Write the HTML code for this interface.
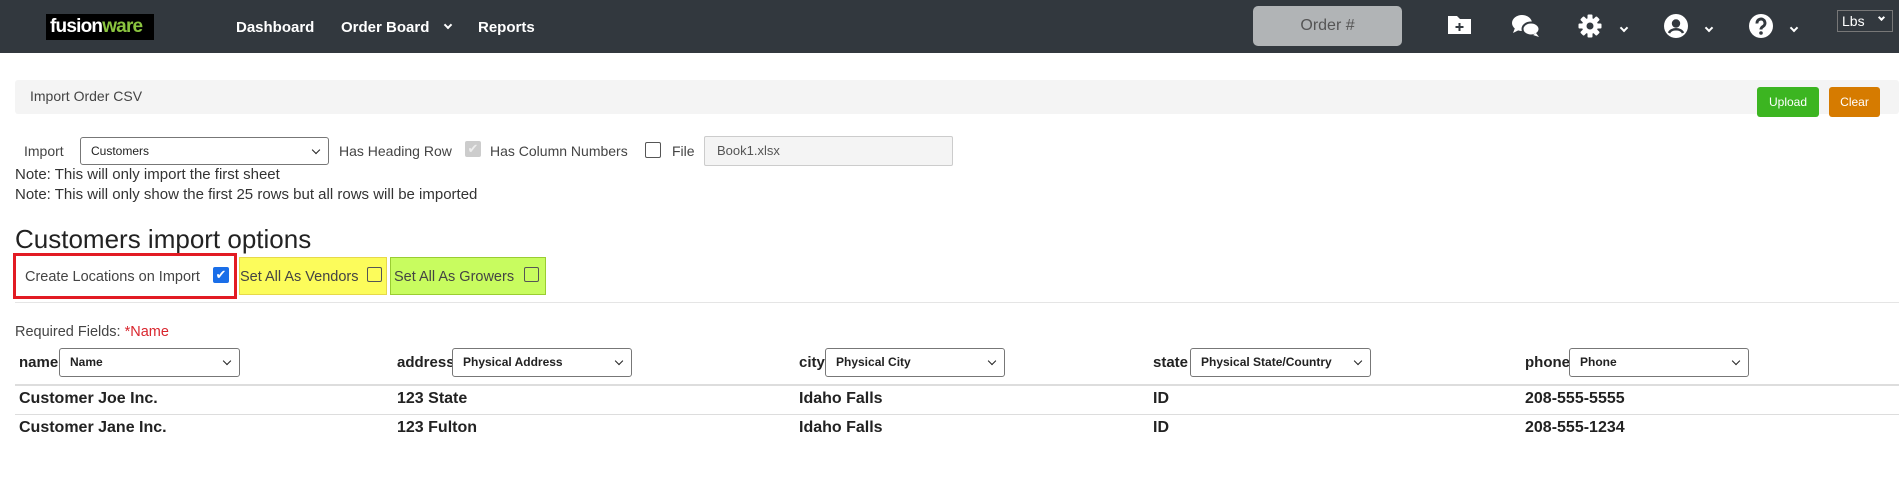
<!DOCTYPE html>
<html><head><meta charset="utf-8"><style>
*{box-sizing:border-box;margin:0;padding:0}
body{width:1899px;height:494px;background:#fff;font-family:"Liberation Sans",sans-serif;color:#333;position:relative;overflow:hidden;font-size:14px}
.a{position:absolute;white-space:nowrap}
.nav{position:absolute;left:0;top:0;width:1899px;height:53px;background:#32383e}
.nl{color:#fff;font-weight:bold;font-size:15px;top:19px}
.sel{position:absolute;border:1px solid #777;border-radius:3px;background:#fff;font-size:12px;font-weight:bold;color:#222;padding-left:10px;line-height:26px}
.sel:after{content:"";position:absolute;right:9px;top:9px;width:5px;height:5px;border-right:1.6px solid #222;border-bottom:1.6px solid #222;transform:rotate(45deg)}
.cb{position:absolute;width:15px;height:15px;border:1.5px solid #555;border-radius:2px;background:transparent}
.chev{position:absolute;width:6px;height:6px;border-right:2px solid #fff;border-bottom:2px solid #fff;transform:rotate(45deg)}
.b{font-weight:bold;font-size:16px;color:#222}
.n{font-size:15px}
.m{font-size:14.5px}
</style></head><body>
<div class="nav"></div>
<div class="a" style="left:46px;top:14px;width:108px;height:26px;background:#000;color:#fff;font-weight:bold;font-size:19px;line-height:26px;padding-left:4px;letter-spacing:-0.8px">fusion<span style="color:#8ac43f">ware</span></div>
<div class="a nl" style="left:236px">Dashboard</div>
<div class="a nl" style="left:341px">Order Board</div>
<div class="chev" style="left:445px;top:22px"></div>
<div class="a nl" style="left:478px">Reports</div>
<div class="a" style="left:1253px;top:6px;width:149px;height:40px;background:#b1b4b6;border-radius:5px;color:#555;font-size:16px;text-align:center;line-height:40px">Order #</div>
<svg class="a" style="left:1447px;top:14px" width="26" height="22" viewBox="0 0 26 22"><path d="M1 2h9l3 3h11v15H1z" fill="#fff"/><path d="M12.5 9v8M8.5 13h8" stroke="#32383e" stroke-width="2"/></svg>
<svg class="a" style="left:1511px;top:13px" width="30" height="26" viewBox="0 0 30 26"><ellipse cx="11" cy="10" rx="10" ry="8" fill="#fff"/><path d="M4 15l-2 5 6-3z" fill="#fff"/><ellipse cx="20" cy="16" rx="8.5" ry="6.5" fill="#fff" stroke="#32383e" stroke-width="2"/><path d="M25 20l3 4-6-2z" fill="#fff"/></svg>
<svg class="a" style="left:1578px;top:14px" width="24" height="24" viewBox="0 0 24 24"><g fill="#fff"><circle cx="12" cy="12" r="8"/><rect x="9.5" y="0.5" width="5" height="5" rx="1"/><rect x="9.5" y="18.5" width="5" height="5" rx="1"/><rect x="0.5" y="9.5" width="5" height="5" rx="1"/><rect x="18.5" y="9.5" width="5" height="5" rx="1"/><rect x="9.5" y="0.5" width="5" height="5" rx="1" transform="rotate(45 12 12)"/><rect x="9.5" y="18.5" width="5" height="5" rx="1" transform="rotate(45 12 12)"/><rect x="0.5" y="9.5" width="5" height="5" rx="1" transform="rotate(45 12 12)"/><rect x="18.5" y="9.5" width="5" height="5" rx="1" transform="rotate(45 12 12)"/></g><circle cx="12" cy="12" r="3.5" fill="#32383e"/></svg>
<div class="chev" style="left:1621px;top:25px"></div>
<svg class="a" style="left:1664px;top:14px" width="24" height="24" viewBox="0 0 24 24"><circle cx="12" cy="12" r="12" fill="#fff"/><circle cx="12" cy="9.5" r="4.2" fill="#32383e"/><path d="M5 19c2-5 12-5 14 0" stroke="#32383e" stroke-width="2.5" fill="none"/></svg>
<div class="chev" style="left:1706px;top:25px"></div>
<svg class="a" style="left:1749px;top:14px" width="24" height="24" viewBox="0 0 24 24"><circle cx="12" cy="12" r="12" fill="#fff"/><path d="M8 9.5a4 4 0 1 1 6 3c-1.5 1-2 1.5-2 3" stroke="#32383e" stroke-width="3" fill="none"/><circle cx="12" cy="19" r="1.8" fill="#32383e"/></svg>
<div class="chev" style="left:1791px;top:25px"></div>
<div class="a" style="left:1837px;top:10px;width:56px;height:22px;border:1px solid #777;color:#fff;font-size:14px;line-height:20px;padding-left:4px">Lbs</div>
<div class="chev" style="left:1879px;top:15px;width:5px;height:5px"></div>

<div class="a" style="left:15px;top:80px;width:1884px;height:34px;background:#f4f4f4;border-radius:3px"></div>
<div class="a" style="left:30px;top:88px;font-size:14px;color:#444">Import Order CSV</div>
<div class="a" style="left:1757px;top:87px;width:62px;height:30px;background:#3cb521;border-radius:3px;color:#fff;font-size:12px;text-align:center;line-height:30px">Upload</div>
<div class="a" style="left:1829px;top:87px;width:51px;height:30px;background:#d67b00;border-radius:3px;color:#fff;font-size:12px;text-align:center;line-height:30px">Clear</div>

<div class="a" style="left:24px;top:143px;color:#444">Import</div>
<div class="sel" style="left:80px;top:137px;width:249px;height:28px;font-weight:normal">Customers</div>
<div class="a" style="left:339px;top:143px;color:#444">Has Heading Row</div>
<div class="a" style="left:465px;top:141px;width:16px;height:16px;background:#ccc;border-radius:2px;color:#eee;font-size:13px;text-align:center;line-height:16px">✔</div>
<div class="a" style="left:490px;top:143px;color:#444">Has Column Numbers</div>
<div class="cb" style="left:645px;top:142px;width:16px;height:16px"></div>
<div class="a" style="left:672px;top:143px;color:#444">File</div>
<div class="a" style="left:704px;top:136px;width:249px;height:30px;background:#f4f4f4;border:1px solid #ccc;border-radius:2px;font-size:13px;color:#555;line-height:28px;padding-left:12px">Book1.xlsx</div>
<div class="a n" style="left:15px;top:166px;color:#333">Note: This will only import the first sheet</div>
<div class="a n" style="left:15px;top:186px;color:#333">Note: This will only show the first 25 rows but all rows will be imported</div>
<div class="a" style="left:15px;top:224px;font-size:26px;color:#222">Customers import options</div>

<div class="a" style="left:13px;top:253px;width:224px;height:46px;border:3px solid #e21b23"></div>
<div class="a m" style="left:25px;top:269px;color:#444">Create Locations on Import</div>
<div class="a" style="left:213px;top:267px;width:16px;height:16px;background:#1a6ee8;border-radius:2px;color:#fff;font-size:13px;text-align:center;line-height:16px">✔</div>
<div class="a" style="left:239px;top:257px;width:148px;height:38px;background:#fcfc5b;border:1px solid #e6d94a"></div>
<div class="a m" style="left:240px;top:269px;color:#444">Set All As Vendors</div>
<div class="cb" style="left:367px;top:267px"></div>
<div class="a" style="left:390px;top:257px;width:156px;height:38px;background:#c8fc5f;border:1px solid #9acd32"></div>
<div class="a m" style="left:394px;top:269px;color:#444">Set All As Growers</div>
<div class="cb" style="left:524px;top:267px"></div>
<div class="a" style="left:15px;top:302px;width:1884px;height:1px;background:#e5e5e5"></div>

<div class="a m" style="left:15px;top:324px;color:#444">Required Fields: <span style="color:#d9262e">*Name</span></div>
<div class="a b" style="left:19px;top:354px;font-size:15px">name</div>
<div class="sel" style="left:59px;top:348px;width:181px;height:29px">Name</div>
<div class="a b" style="left:397px;top:354px;font-size:15px">address</div>
<div class="sel" style="left:452px;top:348px;width:180px;height:29px">Physical Address</div>
<div class="a b" style="left:799px;top:354px;font-size:15px">city</div>
<div class="sel" style="left:825px;top:348px;width:180px;height:29px">Physical City</div>
<div class="a b" style="left:1153px;top:354px;font-size:15px">state</div>
<div class="sel" style="left:1190px;top:348px;width:181px;height:29px">Physical State/Country</div>
<div class="a b" style="left:1525px;top:354px;font-size:15px">phone</div>
<div class="sel" style="left:1569px;top:348px;width:180px;height:29px">Phone</div>
<div class="a" style="left:15px;top:384px;width:1884px;height:2px;background:#ddd"></div>
<div class="a b" style="left:19px;top:390px">Customer Joe Inc.</div>
<div class="a b" style="left:397px;top:390px">123 State</div>
<div class="a b" style="left:799px;top:390px">Idaho Falls</div>
<div class="a b" style="left:1153px;top:390px">ID</div>
<div class="a b" style="left:1525px;top:390px">208-555-5555</div>
<div class="a" style="left:15px;top:414px;width:1884px;height:1px;background:#ddd"></div>
<div class="a b" style="left:19px;top:419px">Customer Jane Inc.</div>
<div class="a b" style="left:397px;top:419px">123 Fulton</div>
<div class="a b" style="left:799px;top:419px">Idaho Falls</div>
<div class="a b" style="left:1153px;top:419px">ID</div>
<div class="a b" style="left:1525px;top:419px">208-555-1234</div>
</body></html>
